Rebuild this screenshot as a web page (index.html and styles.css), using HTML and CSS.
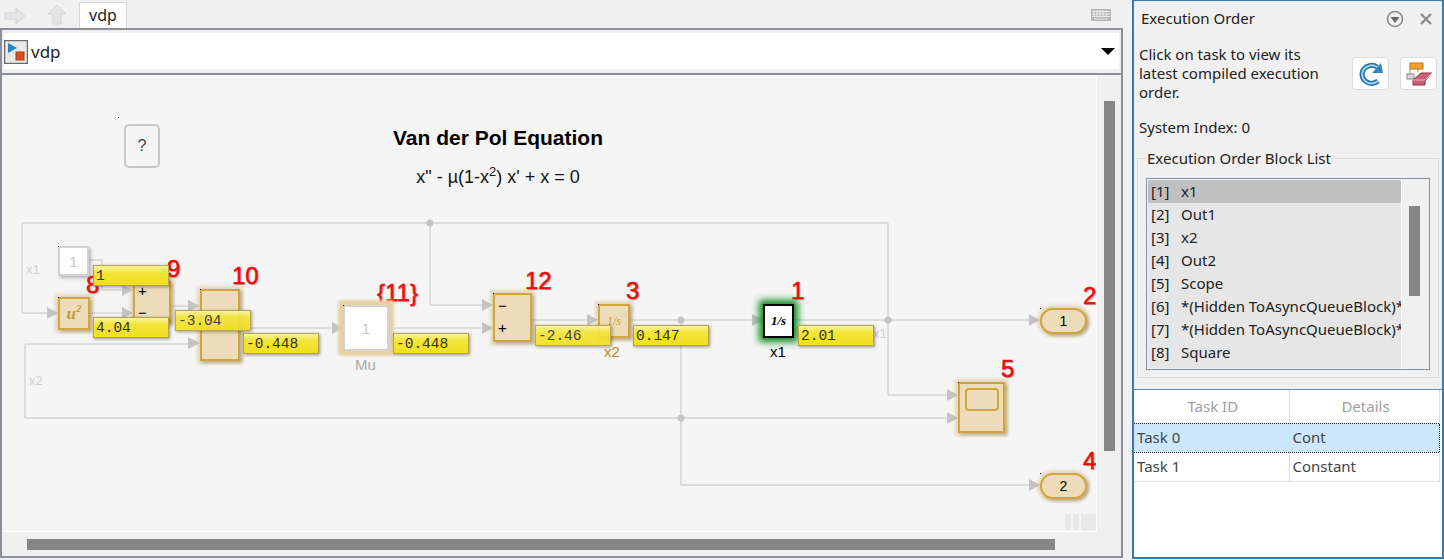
FILE: index.html
```html
<!DOCTYPE html>
<html lang="en">
<head>
  <meta charset="UTF-8">
  <meta name="viewport" content="width=device-width, initial-scale=1.0">
  <title>vdp - Execution Order</title>
  <link rel="stylesheet" href="styles.css">
</head>
<body>

  <!-- Model editor -->
  <main class="editor">
    <div class="toolbar">
      <svg class="nav-back" width="22" height="18" viewBox="0 0 22 18"><path d="M1 6h11V1l9 8-9 8v-5H1z" fill="#e4e4e4" stroke="#d4d4d4"/></svg>
      <svg class="nav-up" width="20" height="21" viewBox="0 0 20 21"><path d="M10 1l9 9h-5v10H6V10H1z" fill="#e4e4e4" stroke="#d4d4d4"/></svg>
      <div class="tab">vdp</div>
      <svg class="keyboard" width="20" height="12" viewBox="0 0 20 12"><rect width="20" height="12" fill="#b4b4b4"/><path d="M1 2.5h18M1 5h18M1 7.5h18M3 10h14M3 1v7M6 1v7M9 1v7M12 1v7M15 1v7" stroke="#ececec"/></svg>
    </div>

    <div class="frame">
      <div class="crumb">
        <div class="crumb-bar">
          <svg class="crumb-icon" width="24" height="24" viewBox="0 0 24 24"><rect x=".5" y=".5" width="23" height="23" fill="#e8e8e8" stroke="#6b6b6b" stroke-width="1.5"/><path d="M4 3l9 5-9 5z" fill="#2a84c4"/><rect x="12" y="12" width="8" height="8" fill="#d4501e" stroke="#b03a10"/></svg>
          <span class="crumb-name">vdp</span>
          <span class="crumb-arrow"></span>
        </div>
      </div>

      <div class="view">
        <div class="canvas">
          <div class="stage">
            <svg class="wires" width="1444" height="560" viewBox="0 0 1444 560">
              <path class="wire" d="M47 313H22V223H888V395H947M430 223V305H482M25 418V344H188M25 418H947M681 320V485H1029M629 320H752M793 320H1029M88 260H102V290H122M89 313H122M171 306H188M239 328H333M389 328H482M531 320H587"/>
              <g class="heads">
                <path d="M47 307l11 6-11 6z"/><path d="M122 284l11 6-11 6z"/><path d="M122 307l11 6-11 6z"/>
                <path d="M188 300l12 6-12 6z"/><path d="M188 337l12 6-12 6z"/><path d="M332 322l11 6-11 6z"/>
                <path d="M482 299l11 6-11 6z"/><path d="M482 322l11 6-11 6z"/><path d="M587 314l11 6-11 6z"/>
                <path d="M752 314l11 6-11 6z"/><path d="M1029 314l11 6-11 6z"/><path d="M947 389l11 6-11 6z"/>
                <path d="M947 412l11 6-11 6z"/><path d="M1029 479l11 6-11 6z"/>
                <circle cx="430" cy="223" r="3.5"/><circle cx="888" cy="320" r="3.5"/>
                <circle cx="681" cy="320" r="3.5"/><circle cx="681" cy="418" r="3.5"/>
              </g>
            </svg>

            <span class="speck"></span>
            <div class="help">?</div>
            <h2 class="eq-title">Van der Pol Equation</h2>
            <p class="eq-text">x" - µ(1-x<sup>2</sup>) x' + x = 0</p>

            <span class="sig sig-x1">x1</span>
            <span class="sig sig-x2">x2</span>
            <span class="sig sig-x1b">x1</span>

            <!-- Order numbers under the value labels -->
            <span class="num num-8">8</span>
            <span class="num num-9">9</span>
            <span class="num num-10">10</span>
            <span class="num num-11">{11}</span>
            <span class="num num-12">12</span>
            <span class="num num-3">3</span>
            <span class="num num-1">1</span>
            <span class="num num-2">2</span>
            <span class="num num-4">4</span>
            <span class="num num-5">5</span>

            <!-- Blocks -->
            <div class="block plain b-const">1</div>
            <div class="block b-square"><i>u<sup>2</sup></i></div>
            <div class="block b-sum1"><span class="sign s-top">+</span><span class="sign s-low">&minus;</span></div>
            <div class="block b-product"></div>
            <div class="block plain b-mu">1</div>
            <span class="cap cap-mu">Mu</span>
            <div class="block b-sum2"><span class="sign s-top2">&minus;</span><span class="sign s-low2">+</span></div>
            <div class="block b-int2"><i>1/s</i></div>
            <span class="cap cap-x2">x2</span>
            <div class="block active b-int1"><i>1/s</i></div>
            <span class="cap cap-x1">x1</span>
            <div class="block port b-out1">1</div>
            <div class="block port b-out2">2</div>
            <div class="block b-scope"><span class="screen"></span></div>

            <!-- Value labels -->
            <div class="value v-1">1</div>
            <div class="value v-2">4.04</div>
            <div class="value v-3">-3.04</div>
            <div class="value v-4">-0.448</div>
            <div class="value v-5">-0.448</div>
            <div class="value v-6">-2.46</div>
            <div class="value v-7">0.147</div>
            <div class="value v-8">2.01</div>

            <div class="grip"><span></span><span></span><span></span></div>
          </div>
        </div>
        <div class="vscroll"><span class="thumb"></span></div>
        <div class="hscroll"><span class="thumb"></span></div>
      </div>
    </div>
  </main>

  <!-- Execution order panel -->
  <aside class="panel">
    <div class="panel-head">
      <span class="panel-title">Execution Order</span>
      <svg class="panel-menu" width="18" height="18" viewBox="0 0 18 18"><circle cx="9" cy="9" r="7.5" fill="none" stroke="#8c8c8c" stroke-width="1.6"/><path d="M4.5 7h9L9 13z" fill="#666"/></svg>
      <svg class="panel-close" width="14" height="14" viewBox="0 0 14 14"><path d="M2 2l10 10M12 2L2 12" stroke="#8c8c8c" stroke-width="2.4"/></svg>
    </div>

    <div class="intro">
      <p>Click on task to view its latest compiled execution order.</p>
      <button class="tool" type="button">
        <svg width="28" height="26" viewBox="0 0 28 26"><path d="M21 20a9.500 9 0 1 1-1-14" fill="none" stroke="#1f6fa8" stroke-width="5"/><path d="M21 20a9.500 9 0 1 1-1-14" fill="none" stroke="#a5d3ee" stroke-width="2"/><path d="M15 12l11 0-2-10z" fill="#2f86bd"/></svg>
      </button>
      <button class="tool" type="button">
        <svg width="28" height="26" viewBox="0 0 28 26"><path d="M5 8v9h3M13 8v3" fill="none" stroke="#8a8a8a"/><rect x="5" y="2" width="13" height="6" fill="#f0a030" stroke="#c8701a"/><rect x="2" y="13" width="7" height="5" fill="#d8d8d8" stroke="#8a8a8a"/><path d="M8 19l8-7h11l-7 8v4H8z" fill="#c8607a" stroke="#8c2f4a"/><path d="M8 19h12l7-7" fill="none" stroke="#f0b0c0"/></svg>
      </button>
    </div>

    <p class="sys-index">System Index: 0</p>

    <fieldset class="group">
      <legend>Execution Order Block List</legend>
      <div class="list">
        <ul class="rows">
          <li class="selected"><b>[1]</b>x1</li>
          <li><b>[2]</b>Out1</li>
          <li><b>[3]</b>x2</li>
          <li><b>[4]</b>Out2</li>
          <li><b>[5]</b>Scope</li>
          <li><b>[6]</b>*(Hidden ToAsyncQueueBlock)*</li>
          <li><b>[7]</b>*(Hidden ToAsyncQueueBlock)*</li>
          <li><b>[8]</b>Square</li>
        </ul>
        <div class="list-scroll"><span class="thumb"></span></div>
      </div>
    </fieldset>

    <table class="tasks">
      <thead>
        <tr><th>Task ID</th><th>Details</th></tr>
      </thead>
      <tbody>
        <tr class="current"><td>Task 0</td><td>Cont</td></tr>
        <tr><td>Task 1</td><td>Constant</td></tr>
      </tbody>
    </table>
  </aside>

</body>
</html>
```

FILE: styles.css
```css
/* General Reset */
* {
  margin: 0;
  padding: 0;
  box-sizing: border-box;
}

body {
  width: 1444px;
  height: 560px;
  overflow: hidden;
  display: flex;
  background-color: #f0f0f0;
  font-family: 'Noto Sans', sans-serif;
  color: #222;
}

/* Editor */
.editor {
  width: 1132px;
  display: flex;
  flex-direction: column;
}

.toolbar {
  height: 28px;
  width: 1123px;
  display: flex;
  align-items: flex-end;
  position: relative;
}

.nav-back {
  margin: 0 0 3px 4px;
}

.nav-up {
  margin: 0 0 3px 21px;
}

.tab {
  width: 48px;
  height: 26px;
  margin-left: 12px;
  background-color: white;
  border: 1px solid #d8d8d8;
  border-bottom: none;
  text-align: center;
  font-size: 16px;
  line-height: 24px;
}

.keyboard {
  margin: 0 12px 7px auto;
}

.frame {
  width: 1123px;
  height: 530px;
  border: 2px solid #8a8f99;
  display: flex;
  flex-direction: column;
}

.crumb {
  height: 45px;
  padding: 3px 2px 4px;
  border-bottom: 2px solid #8a8f99;
}

.crumb-bar {
  height: 36px;
  background-color: white;
  display: flex;
  align-items: center;
  padding-right: 4px;
}

.crumb-icon {
  margin-top: 1px;
}

.crumb-name {
  margin-left: 3px;
  font-size: 17px;
}

.crumb-arrow {
  margin-left: auto;
  border-left: 7px solid transparent;
  border-right: 7px solid transparent;
  border-top: 7px solid black;
}

.view {
  flex: 1;
  display: grid;
  grid-template-columns: 1094px 1fr;
  grid-template-rows: 456px 1fr;
}

.thumb {
  display: block;
  background-color: #868686;
}

.vscroll {
  padding: 26px 0 0 8px;
}

.vscroll .thumb {
  width: 11px;
  height: 350px;
}

.hscroll {
  padding: 8px 0 0 25px;
  grid-column: 1 / 3;
}

.hscroll .thumb {
  width: 1028px;
  height: 11px;
}

/* Diagram canvas: stage coordinates are the page's */
.canvas {
  position: relative;
  overflow: hidden;
  background-color: #f5f5f5;
  box-shadow: 1px 1px 0 white;
  font-family: 'Liberation Sans', sans-serif;
}

.stage {
  position: absolute;
  left: -2px;
  top: -75px;
  width: 1444px;
  height: 560px;
}

.wires {
  position: absolute;
  left: 0;
  top: 0;
}

.wire {
  fill: none;
  stroke: #c4c4c4;
  stroke-width: 1;
}

.heads {
  fill: #c4c4c4;
}

.speck {
  position: absolute;
  left: 118px;
  top: 117px;
  width: 1px;
  height: 1px;
  background-color: black;
}

.help {
  position: absolute;
  left: 124px;
  top: 124px;
  width: 36px;
  height: 44px;
  border: 2px solid #c8c8c8;
  border-radius: 5px;
  text-align: center;
  font-size: 16px;
  line-height: 40px;
  color: #444;
}

.eq-title {
  position: absolute;
  left: 348px;
  top: 126px;
  width: 300px;
  text-align: center;
  font-size: 21px;
  line-height: 24px;
  color: black;
}

.eq-text {
  position: absolute;
  left: 348px;
  top: 166px;
  width: 300px;
  text-align: center;
  font-size: 18px;
  line-height: 22px;
  color: #111;
}

.eq-text sup {
  font-size: 13px;
  line-height: 0;
}

.sig {
  position: absolute;
  font-size: 13px;
  line-height: 16px;
  color: #cfcfcf;
}

.sig-x1 { left: 26px; top: 262px; }
.sig-x2 { left: 29px; top: 373px; }
.sig-x1b { left: 873px; top: 326px; }

/* Order numbers */
.num {
  position: absolute;
  font-size: 24px;
  line-height: 24px;
  color: #ee0b0b;
  -webkit-text-stroke: 0.5px #ee0b0b;
  text-shadow: 1px 1px 1px rgba(90, 40, 40, 0.45);
}

.num-8 { left: 86px; top: 273px; }
.num-9 { left: 167px; top: 257px; }
.num-10 { left: 232px; top: 264px; }
.num-11 { left: 377px; top: 281px; }
.num-12 { left: 525px; top: 269px; }
.num-3 { left: 626px; top: 279px; }
.num-1 { left: 791px; top: 279px; }
.num-2 { left: 1083px; top: 284px; }
.num-4 { left: 1083px; top: 449px; }
.num-5 { left: 1001px; top: 357px; }

/* Blocks */
.block {
  position: absolute;
  display: flex;
  align-items: center;
  justify-content: center;
  background-color: #ecdcb9;
  border: 2px solid #d2a440;
  box-shadow: 0 0 3px 3px rgba(200, 165, 90, 0.35), 2px 2px 3px rgba(90, 80, 50, 0.4);
  font-size: 14px;
  color: #c79a35;
}

.block::before {
  content: "";
  position: absolute;
  left: -2px;
  top: -2px;
  width: 1px;
  height: 1px;
  background-color: black;
}

.block.plain {
  background-color: white;
  border-color: #d2d2d2;
  color: #c8c8c8;
  box-shadow: 2px 2px 3px rgba(90, 90, 90, 0.4);
}

.block i {
  font-family: 'Liberation Serif', serif;
}

.block sup {
  font-size: 11px;
  line-height: 0;
}

.b-const { left: 58px; top: 246px; width: 31px; height: 30px; font-size: 15px; }
.b-square { left: 58px; top: 297px; width: 32px; height: 33px; font-size: 17px; font-weight: bold; }
.b-sum1 { left: 133px; top: 281px; width: 38px; height: 42px; }
.b-product { left: 200px; top: 289px; width: 40px; height: 72px; }
.b-sum2 { left: 493px; top: 293px; width: 39px; height: 49px; }
.b-int2 { left: 598px; top: 304px; width: 32px; height: 34px; font-size: 12px; }
.b-scope { left: 958px; top: 382px; width: 47px; height: 51px; align-items: flex-start; padding-top: 4px; }

.block.plain.b-mu {
  left: 343px;
  top: 305px;
  width: 46px;
  height: 46px;
  font-size: 15px;
  border-radius: 1px;
  box-shadow: 0 0 3px 5px #e5d1a4;
}

.block.active {
  background-color: white;
  border-color: black;
  color: black;
  box-shadow: 0 0 7px 4px #0d8a1c;
}

.b-int1 {
  left: 763px;
  top: 304px;
  width: 31px;
  height: 34px;
  font-weight: bold;
}

.block.active.b-int1 {
  font-size: 13px;
}

.block.port {
  border-radius: 13px;
  color: black;
  font-size: 14px;
}

.b-out1 { left: 1040px; top: 308px; width: 47px; height: 26px; }
.b-out2 { left: 1040px; top: 473px; width: 47px; height: 26px; }

.screen {
  width: 34px;
  height: 23px;
  border: 2px solid #d2a440;
  border-radius: 4px;
}

.sign {
  position: absolute;
  left: 3px;
  font-size: 15px;
  line-height: 14px;
  color: black;
}

.s-top { top: 1px; }
.s-low { top: 23px; }
.s-top2 { top: 4px; }
.s-low2 { top: 26px; }

.cap {
  position: absolute;
  font-size: 13px;
  line-height: 16px;
}

.cap-mu { left: 355px; top: 357px; font-size: 15px; color: #a8a8a8; }
.cap-x2 { left: 604px; top: 344px; font-size: 15px; color: #bb8a2a; }
.cap-x1 { left: 770px; top: 344px; font-size: 15px; color: black; }

/* Value labels */
.value {
  position: absolute;
  width: 76px;
  height: 21px;
  padding-left: 2px;
  background: linear-gradient(to bottom, #f9f3a0 0, #f3e437 35%, #f1df22 100%);
  border: 1px solid #b8a050;
  box-shadow: 1px 1px 3px rgba(80, 70, 40, 0.55);
  font-family: 'Liberation Mono', monospace;
  font-size: 14.5px;
  line-height: 20px;
  color: #333;
}

.v-1 { left: 93px; top: 265px; }
.v-2 { left: 93px; top: 317px; }
.v-3 { left: 175px; top: 310px; opacity: 0.92; }
.v-4 { left: 243px; top: 333px; }
.v-5 { left: 393px; top: 333px; }
.v-6 { left: 535px; top: 325px; opacity: 0.92; }
.v-7 { left: 633px; top: 325px; }
.v-8 { left: 798px; top: 325px; }

.grip {
  position: absolute;
  left: 1065px;
  top: 514px;
  display: flex;
  gap: 2px;
}

.grip span {
  width: 6px;
  height: 16px;
  background-color: #e8e8e8;
}

.grip span:last-child {
  width: 15px;
}

/* Execution order panel */
.panel {
  width: 312px;
  height: 559px;
  border: 2px solid #3a79ad;
  border-top-width: 1px;
  display: flex;
  flex-direction: column;
  font-size: 15px;
  line-height: 19px;
}

.panel-head {
  height: 35px;
  display: flex;
  align-items: center;
  padding: 0 9px 0 7px;
}

.panel-title {
  flex: 1;
}

.panel-close {
  margin-left: 15px;
}

.intro {
  height: 56px;
  margin-top: 9px;
  padding-left: 5px;
  display: flex;
  align-items: flex-start;
  gap: 11px;
}

.intro p {
  flex: none;
  width: 195px;
  margin-right: 7px;
}

.tool {
  flex: none;
  width: 37px;
  height: 33px;
  margin-top: 12px;
  background-color: white;
  border: 1px solid #dcdcdc;
  border-radius: 4px;
  display: flex;
  align-items: center;
  justify-content: center;
}

.sys-index {
  margin-top: 17px;
  padding-left: 5px;
}

.group {
  margin: 12px 3px 0;
  height: 229px;
  padding: 0 8px;
  border: 1px solid #dcdcdc;
}

.group legend {
  margin-left: 0;
  padding: 0 1px;
  line-height: 18px;
}

.list {
  height: 192px;
  display: flex;
  background-color: #f0f0f0;
  border: 1px solid #8290a0;
  margin-top: 11px;
}

.rows {
  width: 253px;
  margin: 1px 0 1px 1px;
  list-style: none;
  background-color: #e6e6e6;
  overflow: hidden;
}

.rows li {
  height: 23px;
  padding-left: 3px;
  line-height: 23px;
  white-space: nowrap;
  overflow: hidden;
}

.rows li.selected {
  background-color: #c0c0c0;
  border-radius: 2px;
}

.rows b {
  display: inline-block;
  width: 30px;
  font-weight: normal;
}

.list-scroll {
  border-left: 1px solid white;
  padding: 27px 0 0 7px;
}

.list-scroll .thumb {
  width: 11px;
  height: 90px;
}

/* Task table */
.tasks {
  flex: 1;
  margin-top: 11px;
  background-color: white;
  border-top: 1px solid #6f8aa5;
  border-collapse: collapse;
  display: block;
}

.tasks th, .tasks td {
  height: 29px;
  text-align: left;
  padding-left: 3px;
  border-right: 1px solid #dedede;
  border-bottom: 1px solid #dedede;
  font-weight: normal;
}

.tasks th {
  height: 33px;
  text-align: center;
  color: #a0a0a0;
  border-bottom: none;
}

.tasks th:first-child, .tasks td:first-child {
  width: 155px;
}

.tasks th:last-child, .tasks td:last-child {
  width: 150px;
}

.tasks td {
  color: #444;
}

.tasks .current td {
  background-color: #cce8ff;
  border-top: 1px dotted #222;
  border-bottom: 1px dotted #222;
}

.tasks .current td:last-child {
  border-right: 1px dotted #222;
}
```
